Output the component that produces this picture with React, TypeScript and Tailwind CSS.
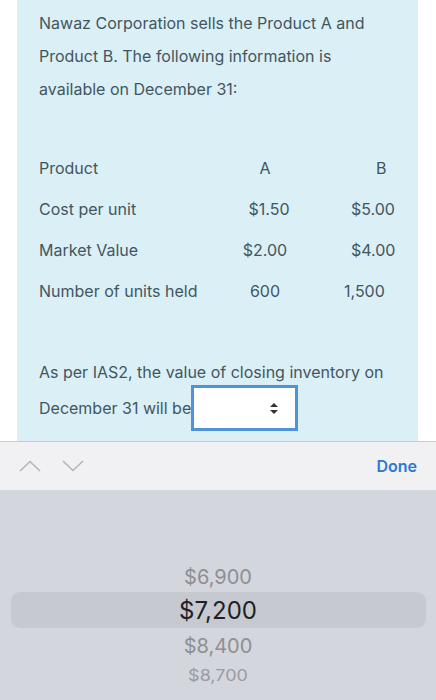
import React from "react";

export default function App() {
  const font = { fontFamily: '"Inter", "Liberation Sans", sans-serif' };
  return (
    <div className="w-[436px] h-[700px] bg-white overflow-hidden flex flex-col" style={font}>
      <div className="ml-[17px] w-[401px] h-[441px] bg-[#dbeff6] pl-[22px] pr-[40px] pt-[7px] text-[#42565f] text-[16px]">
        <p className="leading-[33px]">
          Nawaz Corporation sells the Product A and Product B. The following information is available on December 31:
        </p>
        <div className="mt-[41px] grid grid-cols-[191px_70px_110px]">
          <div className="h-[41px] flex items-center">Product</div>
          <div className="h-[41px] flex items-center justify-center">A</div>
          <div className="h-[41px] flex items-center pl-[76px]">B</div>

          <div className="h-[41px] flex items-center">Cost per unit</div>
          <div className="h-[41px] flex items-center justify-center pl-[8px]">$1.50</div>
          <div className="h-[41px] flex items-center pl-[51px]">$5.00</div>

          <div className="h-[41px] flex items-center">Market Value</div>
          <div className="h-[41px] flex items-center justify-center">$2.00</div>
          <div className="h-[41px] flex items-center pl-[51px]">$4.00</div>

          <div className="h-[41px] flex items-center">Number of units held</div>
          <div className="h-[41px] flex items-center justify-center">600</div>
          <div className="h-[41px] flex items-center pl-[44px]">1,500</div>
        </div>
        <p className="mt-[49px] leading-[24px] whitespace-nowrap">As per IAS2, the value of closing inventory on</p>
        <div className="mt-[1px] flex items-center">
          <span className="whitespace-nowrap">December 31 will be</span>
          <div className="w-[107px] h-[46px] shrink-0 border-[3px] border-[#4f93d8] bg-white flex items-center justify-end pr-[17px]">
            <svg width="8" height="11" viewBox="0 0 8 11">
              <path d="M4 0 L8 4 L0 4 Z" fill="#333" />
              <path d="M4 11 L8 7 L0 7 Z" fill="#333" />
            </svg>
          </div>
        </div>
      </div>
      <div className="h-[49px] bg-[#f1f1f4] border-t border-[#c9cacf] flex items-center px-[19px]">
        <svg width="22" height="12" viewBox="0 0 22 12" className="mr-[21px]">
          <path d="M1 11 L11 1.5 L21 11" fill="none" stroke="#b4b5ba" strokeWidth="1.6" />
        </svg>
        <svg width="22" height="12" viewBox="0 0 22 12">
          <path d="M1 1 L11 10.5 L21 1" fill="none" stroke="#b4b5ba" strokeWidth="1.6" />
        </svg>
        <span className="ml-auto text-[#2c78d2] font-semibold text-[16px]">Done</span>
      </div>
      <div className="flex-1 bg-[#d3d6dc] flex flex-col items-center pt-[74px]">
        <div className="h-[26px] flex items-center text-[20px] text-[#8d8f94]">$6,900</div>
        <div className="w-[415px] h-[36px] rounded-[9px] bg-[#c6c9d0] flex items-center justify-center text-[24px] text-[#1f2124] mt-[2px] pt-[2px]">
          $7,200
        </div>
        <div className="h-[30px] flex items-center text-[20px] text-[#8d8f94] mt-[3px]">$8,400</div>
        <div className="h-[28px] flex items-center text-[18px] text-[#9a9ca1] scale-y-[0.85]">$8,700</div>
      </div>
    </div>
  );
}
